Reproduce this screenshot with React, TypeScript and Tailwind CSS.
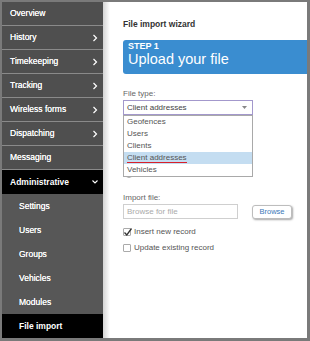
import React from "react";

const topMenu = [
  { label: "Overview", arrow: false },
  { label: "History", arrow: true },
  { label: "Timekeeping", arrow: true },
  { label: "Tracking", arrow: true },
  { label: "Wireless forms", arrow: true },
  { label: "Dispatching", arrow: true },
  { label: "Messaging", arrow: false },
];

const subMenu = ["Settings", "Users", "Groups", "Vehicles", "Modules"];

const fileTypes = ["Geofences", "Users", "Clients", "Client addresses", "Vehicles"];

const Chevron = ({ down }: { down?: boolean }) => (
  <svg width="8" height="8" viewBox="0 0 8 8" className="shrink-0">
    {down ? (
      <path d="M1.5 2.5 L4 5 L6.5 2.5" fill="none" stroke="#fff" strokeWidth="1.1" />
    ) : (
      <path d="M2.5 1 L5.5 4 L2.5 7" fill="none" stroke="#fff" strokeWidth="1.2" />
    )}
  </svg>
);

const Sidebar = () => (
  <div className="w-[101px] shrink-0 flex flex-col bg-[#555555] text-white text-[8.5px]">
    {topMenu.map((item) => (
      <div
        key={item.label}
        className="h-[24px] flex items-center justify-between pl-[8px] pr-[4px] bg-[#4f4f4f] border-b border-[#8a8a8a]"
      >
        <span className="[text-shadow:0_0_0.3px_#fff]">{item.label}</span>
        {item.arrow && <Chevron />}
      </div>
    ))}
    <div className="h-[24px] flex items-center justify-between pl-[8px] pr-[4px] bg-black font-bold">
      <span>Administrative</span>
      <Chevron down />
    </div>
    {subMenu.map((s) => (
      <div key={s} className="h-[24px] flex items-center pl-[17px] bg-[#575757]">
        <span className="[text-shadow:0_0_0.3px_#fff]">{s}</span>
      </div>
    ))}
    <div className="h-[24px] flex items-center pl-[17px] bg-black font-bold">File import</div>
  </div>
);

const Checkbox = ({ checked, label }: { checked?: boolean; label: string }) => (
  <div className="h-[12px] flex items-center gap-[3px] text-[8px] text-[#555]">
    <span className="relative w-[8px] h-[8px] border border-[#aaa] bg-white rounded-[1px]">
      {checked && (
        <svg width="10" height="10" viewBox="0 0 10 10" className="absolute -left-[1px] -top-[2px]">
          <path d="M1.5 5.5 L3.8 8 L8.5 1.5" fill="none" stroke="#333" strokeWidth="1.3" />
        </svg>
      )}
    </span>
    <span>{label}</span>
  </div>
);

export default function App() {
  return (
    <div
      className="w-[310px] h-[341px] flex overflow-hidden bg-white border-t-2 border-l-2 border-r-[3px] border-b-[3px] border-[#7a7a7a]"
      style={{ fontFamily: '"Liberation Sans", Arial, sans-serif' }}
    >
      <Sidebar />
      <div className="w-[7px] shrink-0 bg-gradient-to-r from-[#d4d4d4] to-white" />
      <div className="flex-1 min-w-0 flex flex-col pl-[13px] pt-[16px]">
        <div className="h-[12px] leading-[12px] text-[8.5px] font-bold text-[#333]">File import wizard</div>

        <div className="mt-[10px] -mr-[20px] h-[34px] rounded-l-[3px] bg-[#3a8dd0] text-white pl-[5px] pt-[2px]">
          <div className="text-[9px] leading-[9px] font-bold">STEP 1</div>
          <div className="text-[14.5px] leading-[16px]">Upload your file</div>
        </div>

        <div className="mt-[15px] h-[10px] leading-[10px] text-[8px] text-[#666]">File type:</div>

        <div className="relative mt-[1px] w-[130px]">
          <div className="h-[15px] flex items-center justify-between pl-[3px] pr-[5px] border border-[#a398cc] bg-white text-[8px] text-[#444]">
            <span>Client addresses</span>
            <svg width="5" height="3" viewBox="0 0 5 3">
              <path d="M0 0 L5 0 L2.5 3 Z" fill="#888" />
            </svg>
          </div>
          <div className="absolute left-0 top-[15px] w-[130px] border border-[#a9a9a9] bg-white z-10 text-[8px] text-[#555]">
            {fileTypes.map((t) => (
              <div
                key={t}
                className={`h-[12px] flex items-center pl-[3px] ${t === "Client addresses" ? "bg-[#c4ddf1]" : ""}`}
              >
                {t === "Client addresses" ? (
                  <span className="border-b-[1.5px] border-[#d8202a] leading-[9px]">{t}</span>
                ) : (
                  <span>{t}</span>
                )}
              </div>
            ))}
          </div>
        </div>

        <div className="h-[53px]" />
        <div className="h-[12px] flex items-center gap-[3px] pl-[2px] text-[8px] text-[#777]">
          <span className="w-[8px] h-[8px] rounded-full border border-[#aaa]" />
          <span>CSV</span>
        </div>

        <div className="mt-[13px] h-[10px] leading-[10px] text-[8px] text-[#666]">Import file:</div>
        <div className="mt-[1px] flex items-center">
          <div className="w-[115px] h-[15px] flex items-center pl-[3px] border border-[#cfcfcf] text-[8px] text-[#aaa]">
            Browse for file
          </div>
          <button className="ml-[14px] w-[40px] h-[14px] rounded-[3px] border border-[#bdbdbd] bg-white text-[7.5px] text-[#3a78b8] shadow-[1px_1px_2px_rgba(0,0,0,0.35)]">
            Browse
          </button>
        </div>

        <div className="mt-[7px]">
          <Checkbox checked label="Insert new record" />
        </div>
        <div className="mt-[4px]">
          <Checkbox label="Update existing record" />
        </div>
      </div>
    </div>
  );
}
